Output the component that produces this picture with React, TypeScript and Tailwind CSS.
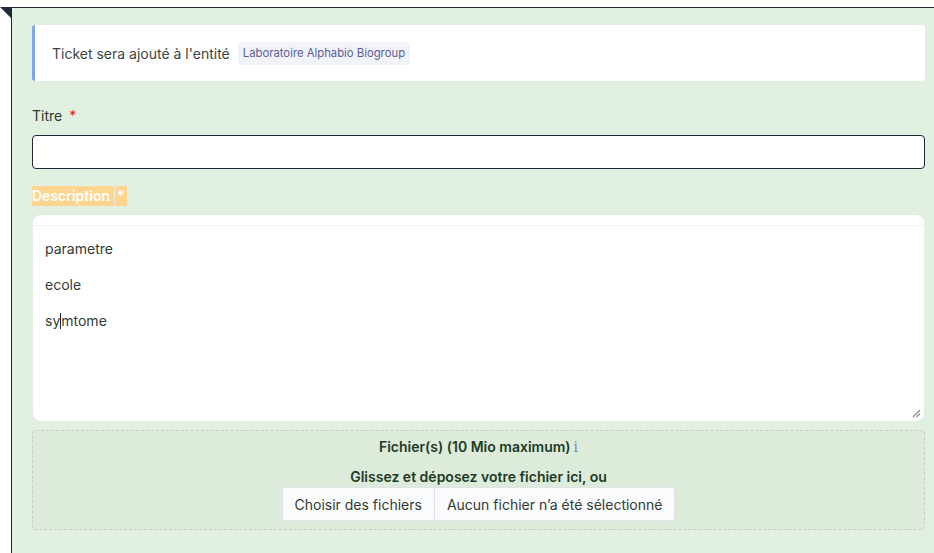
import React from "react";

export default function App() {
  return (
    <div
      className="relative w-[934px] h-[553px] overflow-hidden bg-white"
      style={{ fontFamily: "Inter, 'Noto Sans', sans-serif" }}
    >
      {/* folded corner */}
      <svg className="absolute left-0 top-0" width="14" height="22" viewBox="0 0 14 22">
        <polygon points="0,7 12,7 12,19" fill="#1f2937" />
      </svg>

      <div className="ml-[11px] mt-[7px] h-[546px] border-l border-t border-[#1f2937] bg-[#e2f0e1] pl-[20px] pt-[17px]">
        <div className="w-[893px] flex flex-col">
          {/* info box */}
          <div className="h-[56px] flex items-center gap-[8px] rounded-[3px] border-l-[3px] border-[#7fa7e8] bg-white pl-[17px]">
            <span className="text-[14px] text-[#3b4540]">Ticket sera ajouté à l'entité</span>
            <span className="rounded-[4px] bg-[#f2f3f8] px-[5px] py-[4px] text-[11.3px] leading-[15px] text-[#5a5c98]">
              Laboratoire Alphabio Biogroup
            </span>
          </div>

          {/* titre */}
          <div className="mt-[26px] flex items-center text-[14px] leading-[18px] text-[#2c3a2c]">
            <span>Titre</span>
            <span className="ml-[7px] text-[#e02424]">*</span>
          </div>
          <div className="mt-[10px] h-[34px] rounded-[4px] border border-[#1f2937] bg-white" />

          {/* description */}
          <div className="mt-[17px] flex items-center text-[14px] leading-[20px] font-semibold text-white">
            <span className="bg-[#fed48e] pr-[4px]">Description</span>
            <span className="ml-[1px] bg-[#fed48e] px-[2px]">*</span>
          </div>
          <div className="relative mt-[9px] ml-px mr-px h-[206px] rounded-[8px] bg-white">
            <div className="mt-[10px] border-t border-[#f1f3f1]" />
            <div className="px-[12px] pt-[14px] text-[14px] leading-[18px] text-[#333b36]">
              <p>parametre</p>
              <p className="mt-[18px]">ecole</p>
              <p className="mt-[18px]">
                sy<span className="inline-block w-px h-[16px] align-[-3px] bg-[#1f2937]" />mtome
              </p>
            </div>
            <svg className="absolute right-[3px] bottom-[3px]" width="10" height="10" viewBox="0 0 10 10">
              <line x1="2" y1="9" x2="9" y2="2" stroke="#8a8f8a" strokeWidth="1.2" />
              <line x1="5.5" y1="9" x2="9" y2="5.5" stroke="#8a8f8a" strokeWidth="1.2" />
            </svg>
          </div>

          {/* dropzone */}
          <div className="mt-[9px] h-[100px] rounded-[4px] border border-dashed border-[#c4cec3] bg-[#dcebda] flex flex-col items-center pt-[7px]">
            <div className="flex items-center text-[14px] leading-[18px] font-semibold text-[#213a24]">
              <span>Fichier(s) (10 Mio maximum)</span>
              <span className="ml-[3px] text-[#7b86b8] font-normal" style={{ fontFamily: "'DejaVu Serif', serif" }}>i</span>
            </div>
            <div className="mt-[12px] text-[14px] leading-[18px] font-semibold text-[#213a24]">
              Glissez et déposez votre fichier ici, ou
            </div>
            <div className="mt-px flex h-[34px] rounded-[3px] border border-[#dfe3e7] bg-[#fafbfc] text-[14px] text-[#333a36]">
              <div className="flex items-center px-[12px] border-r border-[#dfe3e7]">Choisir des fichiers</div>
              <div className="flex items-center px-[12px]">Aucun fichier n’a été sélectionné</div>
            </div>
          </div>
        </div>
      </div>
    </div>
  );
}
